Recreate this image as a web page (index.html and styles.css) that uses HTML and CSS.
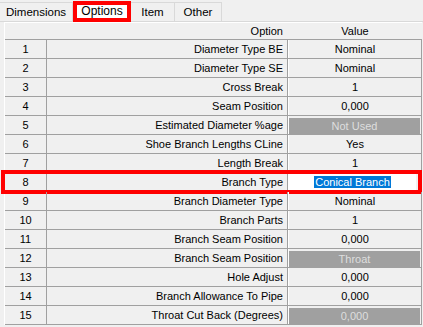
FILE: index.html
```html
<!DOCTYPE html>
<html>
<head>
    <title>Options</title>
    <link rel="stylesheet" href="styles.css">
</head>
<body>
    <div class="tabs">
        <div class="tab first">Dimensions</div>
        <div class="tab active">Options</div>
        <div class="tab">Item</div>
        <div class="tab">Other</div>
    </div>

    <div class="grid">
        <div class="row head">
            <div class="num"></div>
            <div class="opt">Option</div>
            <div class="val">Value</div>
        </div>
        <div class="row"><div class="num">1</div><div class="opt">Diameter Type BE</div><div class="val"><span>Nominal</span></div></div>
        <div class="row"><div class="num">2</div><div class="opt">Diameter Type SE</div><div class="val"><span>Nominal</span></div></div>
        <div class="row"><div class="num">3</div><div class="opt">Cross Break</div><div class="val"><span>1</span></div></div>
        <div class="row"><div class="num">4</div><div class="opt">Seam Position</div><div class="val"><span>0,000</span></div></div>
        <div class="row"><div class="num">5</div><div class="opt">Estimated Diameter %age</div><div class="val disabled"><span>Not Used</span></div></div>
        <div class="row"><div class="num">6</div><div class="opt">Shoe Branch Lengths CLine</div><div class="val"><span>Yes</span></div></div>
        <div class="row"><div class="num">7</div><div class="opt">Length Break</div><div class="val"><span>1</span></div></div>
        <div class="row marked"><div class="num">8</div><div class="opt">Branch Type</div><div class="val editing"><span><em>Conical Branch</em></span></div></div>
        <div class="row"><div class="num">9</div><div class="opt">Branch Diameter Type</div><div class="val"><span>Nominal</span></div></div>
        <div class="row"><div class="num">10</div><div class="opt">Branch Parts</div><div class="val"><span>1</span></div></div>
        <div class="row"><div class="num">11</div><div class="opt">Branch Seam Position</div><div class="val"><span>0,000</span></div></div>
        <div class="row"><div class="num">12</div><div class="opt">Branch Seam Position</div><div class="val disabled"><span>Throat</span></div></div>
        <div class="row"><div class="num">13</div><div class="opt">Hole Adjust</div><div class="val"><span>0,000</span></div></div>
        <div class="row"><div class="num">14</div><div class="opt">Branch Allowance To Pipe</div><div class="val"><span>0,000</span></div></div>
        <div class="row"><div class="num">15</div><div class="opt">Throat Cut Back (Degrees)</div><div class="val disabled"><span>0,000</span></div></div>
    </div>
</body>
</html>
```

FILE: styles.css
```css
body {
    margin: 0;
    background: #f0f0f0;
    font-family: "Liberation Sans", Arial, sans-serif;
    font-size: 11px;
    color: #000;
    width: 423px;
    height: 327px;
    overflow: hidden;
}

/* tab strip */
.tabs {
    display: flex;
    align-items: flex-end;
    height: 22px;
    box-sizing: border-box;
    border-bottom: 1px solid #d9d9d9;
}
.tab {
    box-sizing: border-box;
    height: 19px;
    line-height: 18px;
    padding: 0 6px;
    background: #f0f0f0;
    border: 1px solid #d9d9d9;
    border-bottom: none;
    border-left: none;
    text-align: center;
    font-size: 11.5px;
}
.tab.first {
    width: 73px;
    padding-left: 6px;
    text-align: left;
}
.tab:nth-child(3) { width: 44px; }
.tab:nth-child(4) { width: 47px; }
.tab.active {
    width: 58px;
    height: 21px;
    line-height: 13px;
    background: #fff;
    border: 4px solid #ff0000;
    padding: 0;
    font-size: 12px;
    margin-bottom: -1px;
}

/* option grid */
.grid {
    margin-left: 4px;
    width: 418px;
    border-left: 1px solid #fff;
    box-sizing: border-box;
}
.row {
    position: relative;
    display: grid;
    grid-template-columns: 42px 241px 134px;
    height: 19px;
    box-sizing: border-box;
    border-bottom: 1px solid #a0a0a0;
    line-height: 18px;
}
.row.head {
    height: 18px;
    line-height: 17px;
    border-top: 1px solid #fff;
}
.num {
    text-align: center;
    border-right: 1px solid #a0a0a0;
}
.opt {
    text-align: right;
    padding-right: 4px;
    border-right: 1px solid #a0a0a0;
    white-space: nowrap;
}
.val {
    text-align: center;
    border-right: 1px solid #a0a0a0;
    border-left: 1px solid #fff;
    box-sizing: border-box;
}
.head .num, .head .opt, .head .val {
    border-color: transparent;
}
.val span {
    display: block;
    height: 18px;
}
.val.disabled span {
    margin: 2px 1px 0 0;
    height: 16px;
    line-height: 16px;
    background: #a0a0a0;
    color: #dedede;
}
.val.editing span {
    margin: 1px 5px 1px 0;
    height: 16px;
    line-height: 16px;
    background: #fff;
}
.val.editing em {
    font-style: normal;
    background: #0078d7;
    color: #fff;
    padding: 0 1px;
}

/* annotation around the edited row */
.row.marked::after {
    content: "";
    position: absolute;
    left: -4px;
    top: -3px;
    width: 421px;
    height: 24px;
    box-sizing: border-box;
    border: 4px solid #ff0000;
}
```
